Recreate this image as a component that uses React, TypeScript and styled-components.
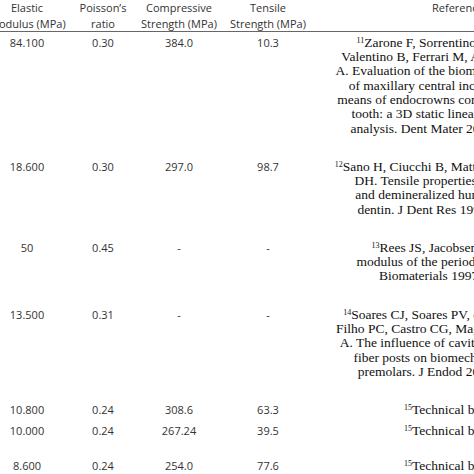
import React from "react";
import styled, { createGlobalStyle } from "styled-components";

const GlobalStyle = createGlobalStyle`
  html, body { margin: 0; padding: 0; background: #ffffff; }
  body { width: 474px; height: 474px; overflow: hidden; }
`;

const Viewport = styled.div`
  width: 474px;
  height: 474px;
  overflow: hidden;
  background: #ffffff;
`;

const Table = styled.table`
  border-collapse: separate;
  border-spacing: 0;
  table-layout: fixed;
  width: 605px;
  margin-left: -11px;
`;

const Col = styled.col<{ $w: number }>`
  width: ${(p) => p.$w}px;
`;

const HeadCell = styled.th<{ $indent?: number }>`
  font-family: "Open Sans", "DejaVu Sans", sans-serif;
  font-weight: 400;
  font-size: 11px;
  line-height: 15.5px;
  color: #333333;
  text-align: ${(p) => (p.$indent ? "left" : "center")};
  padding: 0 0 0 ${(p) => p.$indent ?? 0}px;
  vertical-align: top;
  white-space: nowrap;
  border-bottom: 1.5px solid #666666;
`;

const HeadLine = styled.span`
  display: block;
`;

const Row = styled.tr<{ $after: number }>`
  & > td {
    padding-top: 3.8px;
    padding-bottom: ${(p) => p.$after}px;
  }
`;

const NumCell = styled.td`
  font-family: "Open Sans", "DejaVu Sans", sans-serif;
  font-size: 11px;
  line-height: 14.3px;
  color: #333333;
  text-align: center;
  vertical-align: top;
  white-space: nowrap;
  padding-left: 0;
  padding-right: 0;
`;

const RefCell = styled.td`
  font-family: "Liberation Serif", "Times New Roman", serif;
  font-size: 13.5px;
  line-height: 14.3px;
  color: #111111;
  text-align: center;
  vertical-align: top;
  white-space: nowrap;
  padding-left: 0;
  padding-right: 0;
`;

const RefLine = styled.span`
  display: block;
`;

const Sup = styled.sup`
  font-size: 8px;
  line-height: 0;
  vertical-align: 0.45em;
`;

type Entry = {
  values: string[];
  num: string;
  lines: string[];
  after: number;
};

const entries: Entry[] = [
  {
    values: ["84.100", "0.30", "384.0", "10.3"],
    num: "11",
    lines: [
      "Zarone F, Sorrentino R, Apicella D,",
      "Valentino B, Ferrari M, Aversa R, Apicella",
      "A. Evaluation of the biomechanical behavior",
      "of maxillary central incisors restored by",
      "means of endocrowns compared to a natural",
      "tooth: a 3D static linear finite elements",
      "analysis. Dent Mater 2006;22:1035-44.",
    ],
    after: 20.1,
  },
  {
    values: ["18.600", "0.30", "297.0", "98.7"],
    num: "12",
    lines: [
      "Sano H, Ciucchi B, Matthews WG, Pashley",
      "DH. Tensile properties of mineralized",
      "and demineralized human and bovine",
      "dentin. J Dent Res 1994;73:1205-11.",
    ],
    after: 20.1,
  },
  {
    values: ["50", "0.45", "-", "-"],
    num: "13",
    lines: [
      "Rees JS, Jacobsen PH. Elastic",
      "modulus of the periodontal ligament.",
      "Biomaterials 1997;18:995-9.",
    ],
    after: 20.1,
  },
  {
    values: ["13.500", "0.31", "-", "-"],
    num: "14",
    lines: [
      "Soares CJ, Soares PV, de Freitas Santos-",
      "Filho PC, Castro CG, Magalhães D, Versluis",
      "A. The influence of cavity design and glass",
      "fiber posts on biomechanical behavior",
      "premolars. J Endod 2008;34:1015-9.",
    ],
    after: 20.1,
  },
  {
    values: ["10.800", "0.24", "308.6", "63.3"],
    num: "15",
    lines: ["Technical bulletin"],
    after: 3.4,
  },
  {
    values: ["10.000", "0.24", "267.24", "39.5"],
    num: "15",
    lines: ["Technical bulletin"],
    after: 16.9,
  },
  {
    values: ["8.600", "0.24", "254.0", "77.6"],
    num: "15",
    lines: ["Technical bulletin"],
    after: 20.1,
  },
];

export default function App() {
  return (
    <>
      <GlobalStyle />
      <Viewport>
        <Table>
          <colgroup>
            <Col $w={76} />
            <Col $w={76} />
            <Col $w={76} />
            <Col $w={102} />
            <Col $w={275} />
          </colgroup>
          <thead>
            <tr>
              <HeadCell>
                <HeadLine>Elastic</HeadLine>
                <HeadLine>Modulus (MPa)</HeadLine>
              </HeadCell>
              <HeadCell>
                <HeadLine>Poisson’s</HeadLine>
                <HeadLine>ratio</HeadLine>
              </HeadCell>
              <HeadCell>
                <HeadLine>Compressive</HeadLine>
                <HeadLine>Strength (MPa)</HeadLine>
              </HeadCell>
              <HeadCell>
                <HeadLine>Tensile</HeadLine>
                <HeadLine>Strength (MPa)</HeadLine>
              </HeadCell>
              <HeadCell $indent={113}>
                <HeadLine>References</HeadLine>
              </HeadCell>
            </tr>
          </thead>
          <tbody>
            {entries.map((e, i) => (
              <Row key={i} $after={e.after}>
                {e.values.map((v, j) => (
                  <NumCell key={j}>{v}</NumCell>
                ))}
                <RefCell>
                  {e.lines.map((line, k) => (
                    <RefLine key={k}>
                      {k === 0 && <Sup>{e.num}</Sup>}
                      {line}
                    </RefLine>
                  ))}
                </RefCell>
              </Row>
            ))}
          </tbody>
        </Table>
      </Viewport>
    </>
  );
}
